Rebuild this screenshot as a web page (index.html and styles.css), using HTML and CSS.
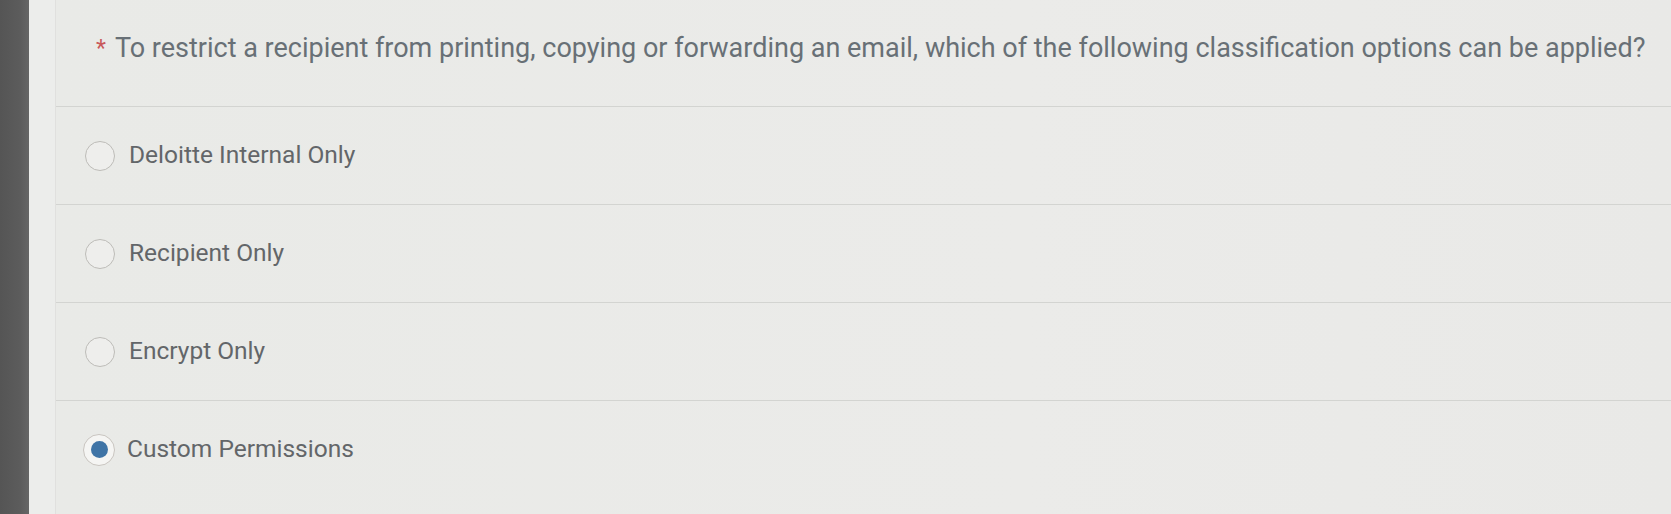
FILE: index.html
```html
<!DOCTYPE html>
<html lang="en">
<head>
<meta charset="utf-8">
<title>Question</title>
<link rel="stylesheet" href="styles.css">
</head>
<body>
<div class="screen">
  <div class="bezel"></div>
  <div class="gutter"></div>
  <main class="card">
    <div class="question">
      <span class="req">*</span>
      <span class="qtext">To restrict a recipient from printing, copying or forwarding an email, which of the following classification options can be applied?</span>
    </div>
    <label class="option">
      <span class="radio"></span>
      <span class="label">Deloitte Internal Only</span>
    </label>
    <label class="option">
      <span class="radio"></span>
      <span class="label">Recipient Only</span>
    </label>
    <label class="option">
      <span class="radio"></span>
      <span class="label">Encrypt Only</span>
    </label>
    <label class="option">
      <span class="radio checked"></span>
      <span class="label">Custom Permissions</span>
    </label>
  </main>
</div>
</body>
</html>
```

FILE: styles.css
```css
html, body {
  margin: 0;
  padding: 0;
  height: 100%;
}
body {
  background: #e9e9e7;
  font-family: Roboto, "Liberation Sans", Arial, sans-serif;
  overflow: hidden;
}
.screen {
  display: flex;
  height: 514px;
}
.bezel {
  width: 29px;
  flex: none;
  background: linear-gradient(90deg, #555 0%, #5c5c5c 70%, #666 100%);
}
.gutter {
  width: 26px;
  flex: none;
  background: #ecedeb;
  border-right: 1px solid #e0e0de;
}
.card {
  flex: 1;
  background: linear-gradient(90deg, #e9eae7 0%, #ebebe9 60%, #e9e9e7 100%);
}
.question {
  height: 107px;
  box-sizing: border-box;
  padding-bottom: 10px;
  display: flex;
  align-items: center;
  padding-left: 40px;
  color: #687076;
  font-size: 27px;
  white-space: nowrap;
  border-bottom: 1px solid #d3d4d1;
}
.req {
  color: #c8585a;
  margin-right: 9px;
  font-size: 23px;
}
.option {
  height: 97px;
  display: flex;
  align-items: center;
  padding-left: 29px;
  border-bottom: 1px solid #d3d4d1;
  color: #636669;
  font-size: 24.5px;
}
.option:last-child {
  border-bottom: none;
}
.radio {
  width: 28px;
  height: 28px;
  border-radius: 50%;
  border: 1.5px solid #bdbcb8;
  background: #eeeeec;
  margin-right: 14px;
  flex: none;
  display: flex;
  align-items: center;
  justify-content: center;
}
.radio.checked {
  width: 30px;
  height: 30px;
  margin-left: -2px;
  margin-right: 12px;
  background: #f5f5f3;
  border-color: #c9c5c0;
}
.radio.checked::after {
  content: "";
  width: 17px;
  height: 17px;
  border-radius: 50%;
  background: #3f74a6;
}
.label {
  line-height: 1;
}
```
